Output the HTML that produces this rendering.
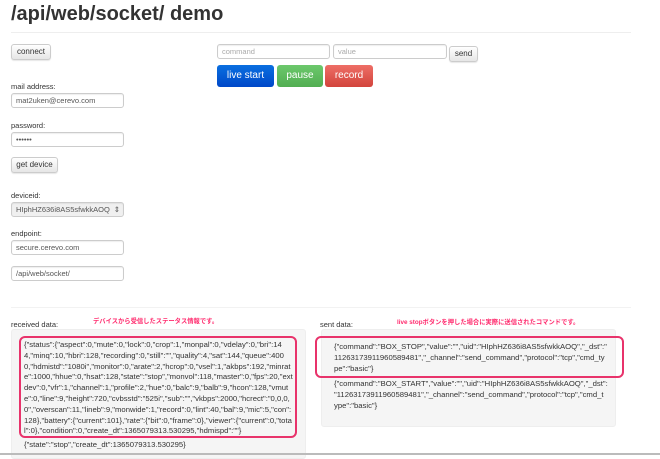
<!DOCTYPE html>
<html><head><meta charset="utf-8"><style>
*{margin:0;padding:0;box-sizing:border-box}
body{width:660px;height:455px;background:#fff;font-family:"Liberation Sans","Noto Sans CJK JP",sans-serif;color:#333;position:relative;overflow:hidden;font-size:8px}
.a{position:absolute}
h1{position:absolute;left:11px;top:3px;font-size:20px;font-weight:bold;color:#333}
.hr{position:absolute;left:11px;width:620px;height:1px;background:#eee}
.btn{position:absolute;border:1px solid #ccc;border-radius:3px;background:linear-gradient(#fff,#e6e6e6);font-size:8px;color:#333;text-align:center;box-shadow:0 1px 1px rgba(0,0,0,.1)}
.in{position:absolute;border:1px solid #ccc;border-radius:3px;background:#fff;font-size:7.5px;color:#555;padding-left:4px;box-shadow:inset 0 1px 1px rgba(0,0,0,.07)}
.lbl{position:absolute;left:11px;font-size:7.5px;color:#333}
.cb{position:absolute;border-radius:3px;color:#fff;font-size:10px;text-align:center;line-height:22px}
.box{position:absolute;background:#f5f5f5;border:1px solid #eee;border-radius:3px}
.pk{position:absolute;border:2px solid #e8336b;border-radius:6px}
.txt{position:absolute;font-size:7.7px;line-height:10.8px;color:#333;word-break:break-all}
.nw{white-space:nowrap;word-break:normal}
.note{position:absolute;color:#ff2a6d;font-size:6.3px;font-weight:bold}
</style></head><body>
<h1>/api/web/socket/ demo</h1>
<div class="hr" style="top:32px"></div>
<div class="btn" style="left:11px;top:44px;width:40px;height:16px;line-height:14px">connect</div>
<div class="in" style="left:217px;top:44px;width:113px;height:15px;line-height:13px;color:#aaa">command</div>
<div class="in" style="left:333px;top:44px;width:114px;height:15px;line-height:13px;color:#aaa">value</div>
<div class="btn" style="left:449px;top:46px;width:29px;height:16px;line-height:14px">send</div>
<div class="cb" style="left:217px;top:65px;width:57px;height:22px;background:linear-gradient(#0a6fe0,#0048c8)">live start</div>
<div class="cb" style="left:277px;top:65px;width:46px;height:22px;background:linear-gradient(#6cc86c,#52ae52)">pause</div>
<div class="cb" style="left:325px;top:65px;width:48px;height:22px;background:linear-gradient(#ee6e66,#d2443c)">record</div>
<div class="lbl" style="top:82px">mail address:</div>
<div class="in" style="left:11px;top:93px;width:113px;height:15px;line-height:13px">mat2uken@cerevo.com</div>
<div class="lbl" style="top:121px">password:</div>
<div class="in" style="left:11px;top:132px;width:113px;height:15px;line-height:13px">••••••</div>
<div class="btn" style="left:11px;top:157px;width:47px;height:16px;line-height:14px">get device</div>
<div class="lbl" style="top:191px">deviceid:</div>
<div class="in" style="left:11px;top:202px;width:113px;height:15px;line-height:13px;background:#f0f0f0">HIphHZ636i8AS5sfwkkAOQ<span style="position:absolute;right:3px">⇕</span></div>
<div class="lbl" style="top:229px">endpoint:</div>
<div class="in" style="left:11px;top:240px;width:113px;height:15px;line-height:13px">secure.cerevo.com</div>
<div class="in" style="left:11px;top:266px;width:113px;height:15px;line-height:13px">/api/web/socket/</div>
<div class="hr" style="top:307px;background:#f2f2f2"></div>
<div class="lbl" style="top:320px">received data:</div>
<div class="note" style="left:93px;top:316px">デバイスから受信したステータス情報です。</div>
<div class="box" style="left:11px;top:329px;width:295px;height:130px"></div>
<div class="txt" style="left:24px;top:340px;width:270px">{"status":{"aspect":0,"mute":0,"lock":0,"crop":1,"monpal":0,"vdelay":0,"bri":144,"minq":10,"hbri":128,"recording":0,"still":"","quality":4,"sat":144,"queue":4000,"hdmistd":"1080i","monitor":0,"arate":2,"hcrop":0,"vsel":1,"akbps":192,"minrate":1000,"hhue":0,"hsat":128,"state":"stop","monvol":118,"master":0,"fps":20,"extdev":0,"vfr":1,"channel":1,"profile":2,"hue":0,"balc":9,"balb":9,"hcon":128,"vmute":0,"line":9,"height":720,"cvbsstd":"525i","sub":"","vkbps":2000,"hcrect":"0,0,0,0","overscan":11,"lineb":9,"monwide":1,"record":0,"lint":40,"bal":9,"mic":5,"con":128},"battery":{"current":101},"rate":{"bit":0,"frame":0},"viewer":{"current":0,"total":0},"condition":0,"create_dt":1365079313.530295,"hdmispd":""}</div>
<div class="pk" style="left:19px;top:336px;width:278px;height:102px"></div>
<div class="txt" style="left:24px;top:440px">{"state":"stop","create_dt":1365079313.530295}</div>
<div class="lbl" style="left:320px;top:320px">sent data:</div>
<div class="note" style="left:397px;top:317px">live stopボタンを押した場合に実際に送信されたコマンドです。</div>
<div class="box" style="left:321px;top:329px;width:295px;height:98px"></div>
<div class="txt nw" style="left:334px;top:342px">{"command":"BOX_STOP","value":"","uid":"HIphHZ636i8AS5sfwkkAOQ","_dst":"<br>11263173911960589481","_channel":"send_command","protocol":"tcp","cmd_ty<br>pe":"basic"}</div>
<div class="pk" style="left:315px;top:336px;width:309px;height:42px"></div>
<div class="txt nw" style="left:334px;top:379px">{"command":"BOX_START","value":"","uid":"HIphHZ636i8AS5sfwkkAOQ","_dst":<br>"11263173911960589481","_channel":"send_command","protocol":"tcp","cmd_t<br>ype":"basic"}</div>
<div class="a" style="left:0;top:453px;width:660px;height:2px;background:#bbb"></div>
</body></html>
